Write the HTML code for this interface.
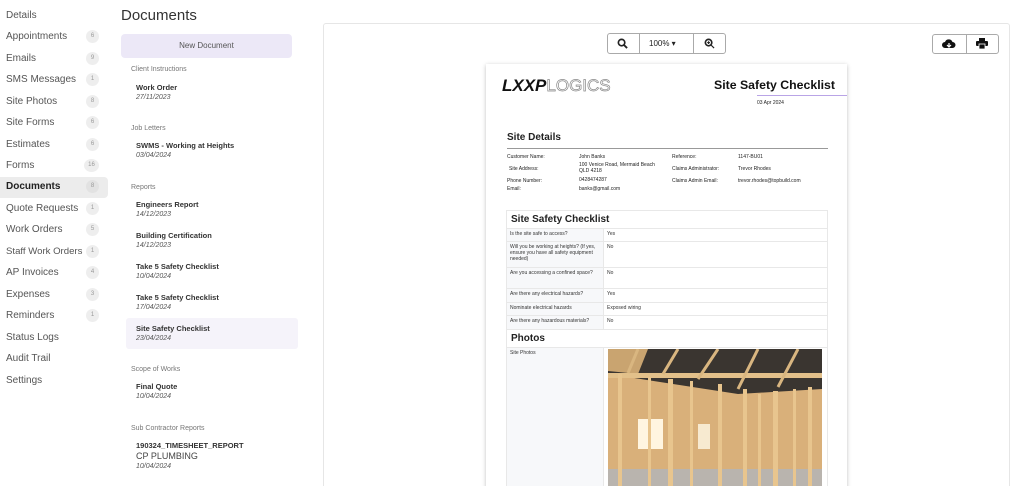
<!DOCTYPE html>
<html style="width:1024px;height:486px;overflow:hidden"><head><meta charset="utf-8"><style>
*{margin:0;padding:0;box-sizing:border-box}
body{width:1024px;height:486px;overflow:hidden;background:#fff;font-family:"Liberation Sans",sans-serif;color:#333;position:relative}
.a{position:absolute;white-space:nowrap}
.nav{font-size:10px;color:#555;left:6px}
.bdg{position:absolute;left:86px;width:13px;height:13px;border-radius:50%;background:#eee;color:#999;font-size:6px;text-align:center;line-height:13px}
.sec{font-size:7px;color:#777;left:131px}
.dt{font-size:7.5px;font-weight:bold;color:#333;left:136px}
.dd{font-size:7px;color:#555;font-style:italic;left:136px}
.p{font-size:5px;color:#222}
table{border-collapse:collapse;position:absolute;left:506px;top:210px;width:322px;font-size:5px;color:#333}
td{border:1px solid #e8e8e8;padding:2px 3px;vertical-align:top}
td.l{background:#f7f8fa;width:97px}
td.h{font-size:10px;font-weight:bold;color:#222;padding:3px 4px}
#clip{position:absolute;left:0;top:0;width:1024px;height:486px;overflow:hidden}
</style></head><body><div id="clip">
<div style="position:absolute;left:0;top:177px;width:108px;height:21px;background:#ececec;border-radius:0 4px 4px 0"></div>
<div class="a nav" style="top:10px">Details</div>
<div class="a nav" style="top:31px">Appointments</div><div class="bdg" style="top:30px">6</div>
<div class="a nav" style="top:53px">Emails</div><div class="bdg" style="top:52px">9</div>
<div class="a nav" style="top:74px">SMS Messages</div><div class="bdg" style="top:73px">1</div>
<div class="a nav" style="top:96px">Site Photos</div><div class="bdg" style="top:95px">8</div>
<div class="a nav" style="top:117px">Site Forms</div><div class="bdg" style="top:116px">6</div>
<div class="a nav" style="top:139px">Estimates</div><div class="bdg" style="top:138px">6</div>
<div class="a nav" style="top:160px">Forms</div><div class="bdg" style="top:159px;width:15px;left:84px">16</div>
<div class="a nav" style="top:181px;color:#222;font-weight:bold">Documents</div><div class="bdg" style="top:180px;background:#e2e2e2">8</div>
<div class="a nav" style="top:203px">Quote Requests</div><div class="bdg" style="top:202px">1</div>
<div class="a nav" style="top:224px">Work Orders</div><div class="bdg" style="top:223px">5</div>
<div class="a nav" style="top:246px;font-size:9.6px">Staff Work Orders</div><div class="bdg" style="top:245px">1</div>
<div class="a nav" style="top:267px">AP Invoices</div><div class="bdg" style="top:266px">4</div>
<div class="a nav" style="top:289px">Expenses</div><div class="bdg" style="top:288px">3</div>
<div class="a nav" style="top:310px">Reminders</div><div class="bdg" style="top:309px">1</div>
<div class="a nav" style="top:332px">Status Logs</div>
<div class="a nav" style="top:353px">Audit Trail</div>
<div class="a nav" style="top:375px">Settings</div>

<div class="a" style="left:121px;top:7px;font-size:15px;color:#333">Documents</div>
<div class="a" style="left:121px;top:34px;width:171px;height:24px;background:#ece8f7;border-radius:4px;font-size:8px;color:#555;text-align:center;line-height:24px">New Document</div>
<div class="a sec" style="top:66px">Client Instructions</div>
<div class="a dt" style="top:83px">Work Order</div><div class="a dd" style="top:94px">27/11/2023</div>
<div class="a sec" style="top:125px">Job Letters</div>
<div class="a dt" style="top:141px">SWMS - Working at Heights</div><div class="a dd" style="top:152px">03/04/2024</div>
<div class="a sec" style="top:184px">Reports</div>
<div class="a dt" style="top:200px">Engineers Report</div><div class="a dd" style="top:211px">14/12/2023</div>
<div class="a dt" style="top:231px">Building Certification</div><div class="a dd" style="top:242px">14/12/2023</div>
<div class="a dt" style="top:262px">Take 5 Safety Checklist</div><div class="a dd" style="top:273px">10/04/2024</div>
<div class="a dt" style="top:293px">Take 5 Safety Checklist</div><div class="a dd" style="top:304px">17/04/2024</div>
<div class="a" style="left:126px;top:318px;width:172px;height:31px;background:#f5f3fa;border-radius:3px"></div>
<div class="a dt" style="top:324px">Site Safety Checklist</div><div class="a dd" style="top:335px">23/04/2024</div>
<div class="a sec" style="top:366px">Scope of Works</div>
<div class="a dt" style="top:382px">Final Quote</div><div class="a dd" style="top:393px">10/04/2024</div>
<div class="a sec" style="top:425px">Sub Contractor Reports</div>
<div class="a dt" style="top:441px">190324_TIMESHEET_REPORT</div>
<div class="a" style="left:136px;top:451px;font-size:9px;color:#444">CP PLUMBING</div>
<div class="a dd" style="top:463px">10/04/2024</div>

<div class="a" style="left:323px;top:23px;width:687px;height:480px;border:1px solid #e6e6e6;border-radius:3px"></div>
<div class="a" style="left:607px;top:33px;width:119px;height:21px;border:1px solid #aaa;border-radius:3px;background:#fff"></div>
<div class="a" style="left:639px;top:33px;width:55px;height:21px;border-left:1px solid #aaa;border-right:1px solid #aaa"></div>
<svg class="a" style="left:617px;top:38px" width="11" height="11" viewBox="0 0 12 12"><circle cx="5" cy="5" r="3.5" fill="none" stroke="#222" stroke-width="1.8"/><path d="M7.5 7.5L11 11" stroke="#222" stroke-width="2"/></svg>
<div class="a" style="left:649px;top:39px;font-size:8px;color:#222">100% ▾</div>
<svg class="a" style="left:704px;top:38px" width="11" height="11" viewBox="0 0 12 12"><circle cx="5" cy="5" r="3.5" fill="none" stroke="#222" stroke-width="1.8"/><path d="M7.5 7.5L11 11M3.5 5h3M5 3.5v3" stroke="#222" stroke-width="1.3"/></svg>
<div class="a" style="left:932px;top:34px;width:67px;height:20px;border:1px solid #aaa;border-radius:3px"></div>
<div class="a" style="left:966px;top:34px;width:1px;height:20px;background:#aaa"></div>
<svg class="a" style="left:942px;top:39px" width="14" height="10" viewBox="0 0 14 10"><path d="M3 9a3 3 0 0 1 0-6 4 4 0 0 1 7.5 0 3 3 0 0 1 0 6z" fill="#111"/><path d="M7 4v4M5 6l2 2 2-2" stroke="#fff" stroke-width="1.2" fill="none"/></svg>
<svg class="a" style="left:976px;top:38px" width="12" height="11" viewBox="0 0 12 11"><rect x="3" y="0" width="6" height="3" fill="#111"/><rect x="0" y="3" width="12" height="5" rx="1" fill="#111"/><rect x="3" y="6" width="6" height="5" fill="#111" stroke="#fff" stroke-width="0.8"/></svg>

<div class="a" style="left:486px;top:64px;width:361px;height:440px;background:#fff;box-shadow:0 1px 4px rgba(0,0,0,.25)"></div>
<div class="a" style="left:502px;top:76px;font-size:17px;font-weight:bold;font-style:italic;color:#111">LXXP<span style="font-style:normal;font-weight:normal;color:#fff;-webkit-text-stroke:0.7px #888">LOGICS</span></div>
<div class="a" style="left:714px;top:78px;font-size:12.3px;font-weight:bold;color:#111">Site Safety Checklist</div>
<div class="a" style="left:757px;top:95px;width:90px;height:1px;background:#b9a4e6"></div>
<div class="a p" style="left:757px;top:100px">03 Apr 2024</div>
<div class="a" style="left:507px;top:132px;font-size:10px;font-weight:bold;color:#222">Site Details</div>
<div class="a" style="left:507px;top:148px;width:321px;height:1px;background:#999"></div>
<div class="a p" style="left:507px;top:154px">Customer Name:</div><div class="a p" style="left:579px;top:154px">John Banks</div>
<div class="a p" style="left:672px;top:154px">Reference:</div><div class="a p" style="left:738px;top:154px">1147-BU01</div>
<div class="a p" style="left:509px;top:166px">Site Address:</div><div class="a p" style="left:579px;top:162px;line-height:6px">100 Venice Road, Mermaid Beach<br>QLD 4218</div>
<div class="a p" style="left:672px;top:166px">Claims Administrator:</div><div class="a p" style="left:738px;top:166px">Trevor Rhodes</div>
<div class="a p" style="left:507px;top:178px">Phone Number:</div><div class="a p" style="left:579px;top:177px">0428474287</div>
<div class="a p" style="left:672px;top:178px">Claims Admin Email:</div><div class="a p" style="left:738px;top:178px">trevor.rhodes@topbuild.com</div>
<div class="a p" style="left:507px;top:186px">Email:</div><div class="a p" style="left:579px;top:186px">banks@gmail.com</div>

<table>
<tr style="height:17px"><td class="h" colspan="2">Site Safety Checklist</td></tr>
<tr style="height:13px"><td class="l">Is the site safe to access?</td><td>Yes</td></tr>
<tr style="height:26px"><td class="l">Will you be working at heights? (If yes, ensure you have all safety equipment needed)</td><td>No</td></tr>
<tr style="height:21px"><td class="l">Are you accessing a confined space?</td><td>No</td></tr>
<tr style="height:14px"><td class="l">Are there any electrical hazards?</td><td>Yes</td></tr>
<tr style="height:13px"><td class="l">Nominate electrical hazards</td><td>Exposed wiring</td></tr>
<tr style="height:14px"><td class="l">Are there any hazardous materials?</td><td>No</td></tr>
<tr style="height:18px"><td class="h" colspan="2">Photos</td></tr>
<tr style="height:160px"><td class="l">Site Photos</td><td></td></tr>
</table>
<svg class="a" style="left:608px;top:349px" width="214" height="137" viewBox="0 0 214 137">
<rect width="214" height="137" fill="#d9b07a"/>
<polygon points="0,0 214,0 214,40 130,45 0,25" fill="#3a3530"/>
<polygon points="0,0 40,0 30,25 0,22" fill="#c9a470"/>
<rect x="0" y="24" width="214" height="5" fill="#e2c08a"/>
<rect x="0" y="120" width="214" height="17" fill="#b9b4ae"/>
<rect x="30" y="70" width="25" height="30" fill="#fff5e0"/>
<rect x="90" y="75" width="12" height="25" fill="#f7ead0"/>
<g fill="#e8c58e"><rect x="10" y="25" width="4" height="112"/><rect x="40" y="28" width="3" height="109"/><rect x="60" y="30" width="5" height="107"/><rect x="82" y="32" width="3" height="105"/><rect x="110" y="35" width="4" height="102"/><rect x="135" y="40" width="4" height="97"/><rect x="150" y="45" width="3" height="92"/><rect x="165" y="42" width="5" height="95"/><rect x="185" y="40" width="3" height="97"/><rect x="200" y="38" width="4" height="99"/></g>
<g stroke="#d9b680" stroke-width="3"><path d="M30 0L20 24M70 0L55 25M110 0L90 30M150 0L130 40M190 0L170 38"/></g>
</svg>
</div></body></html>
